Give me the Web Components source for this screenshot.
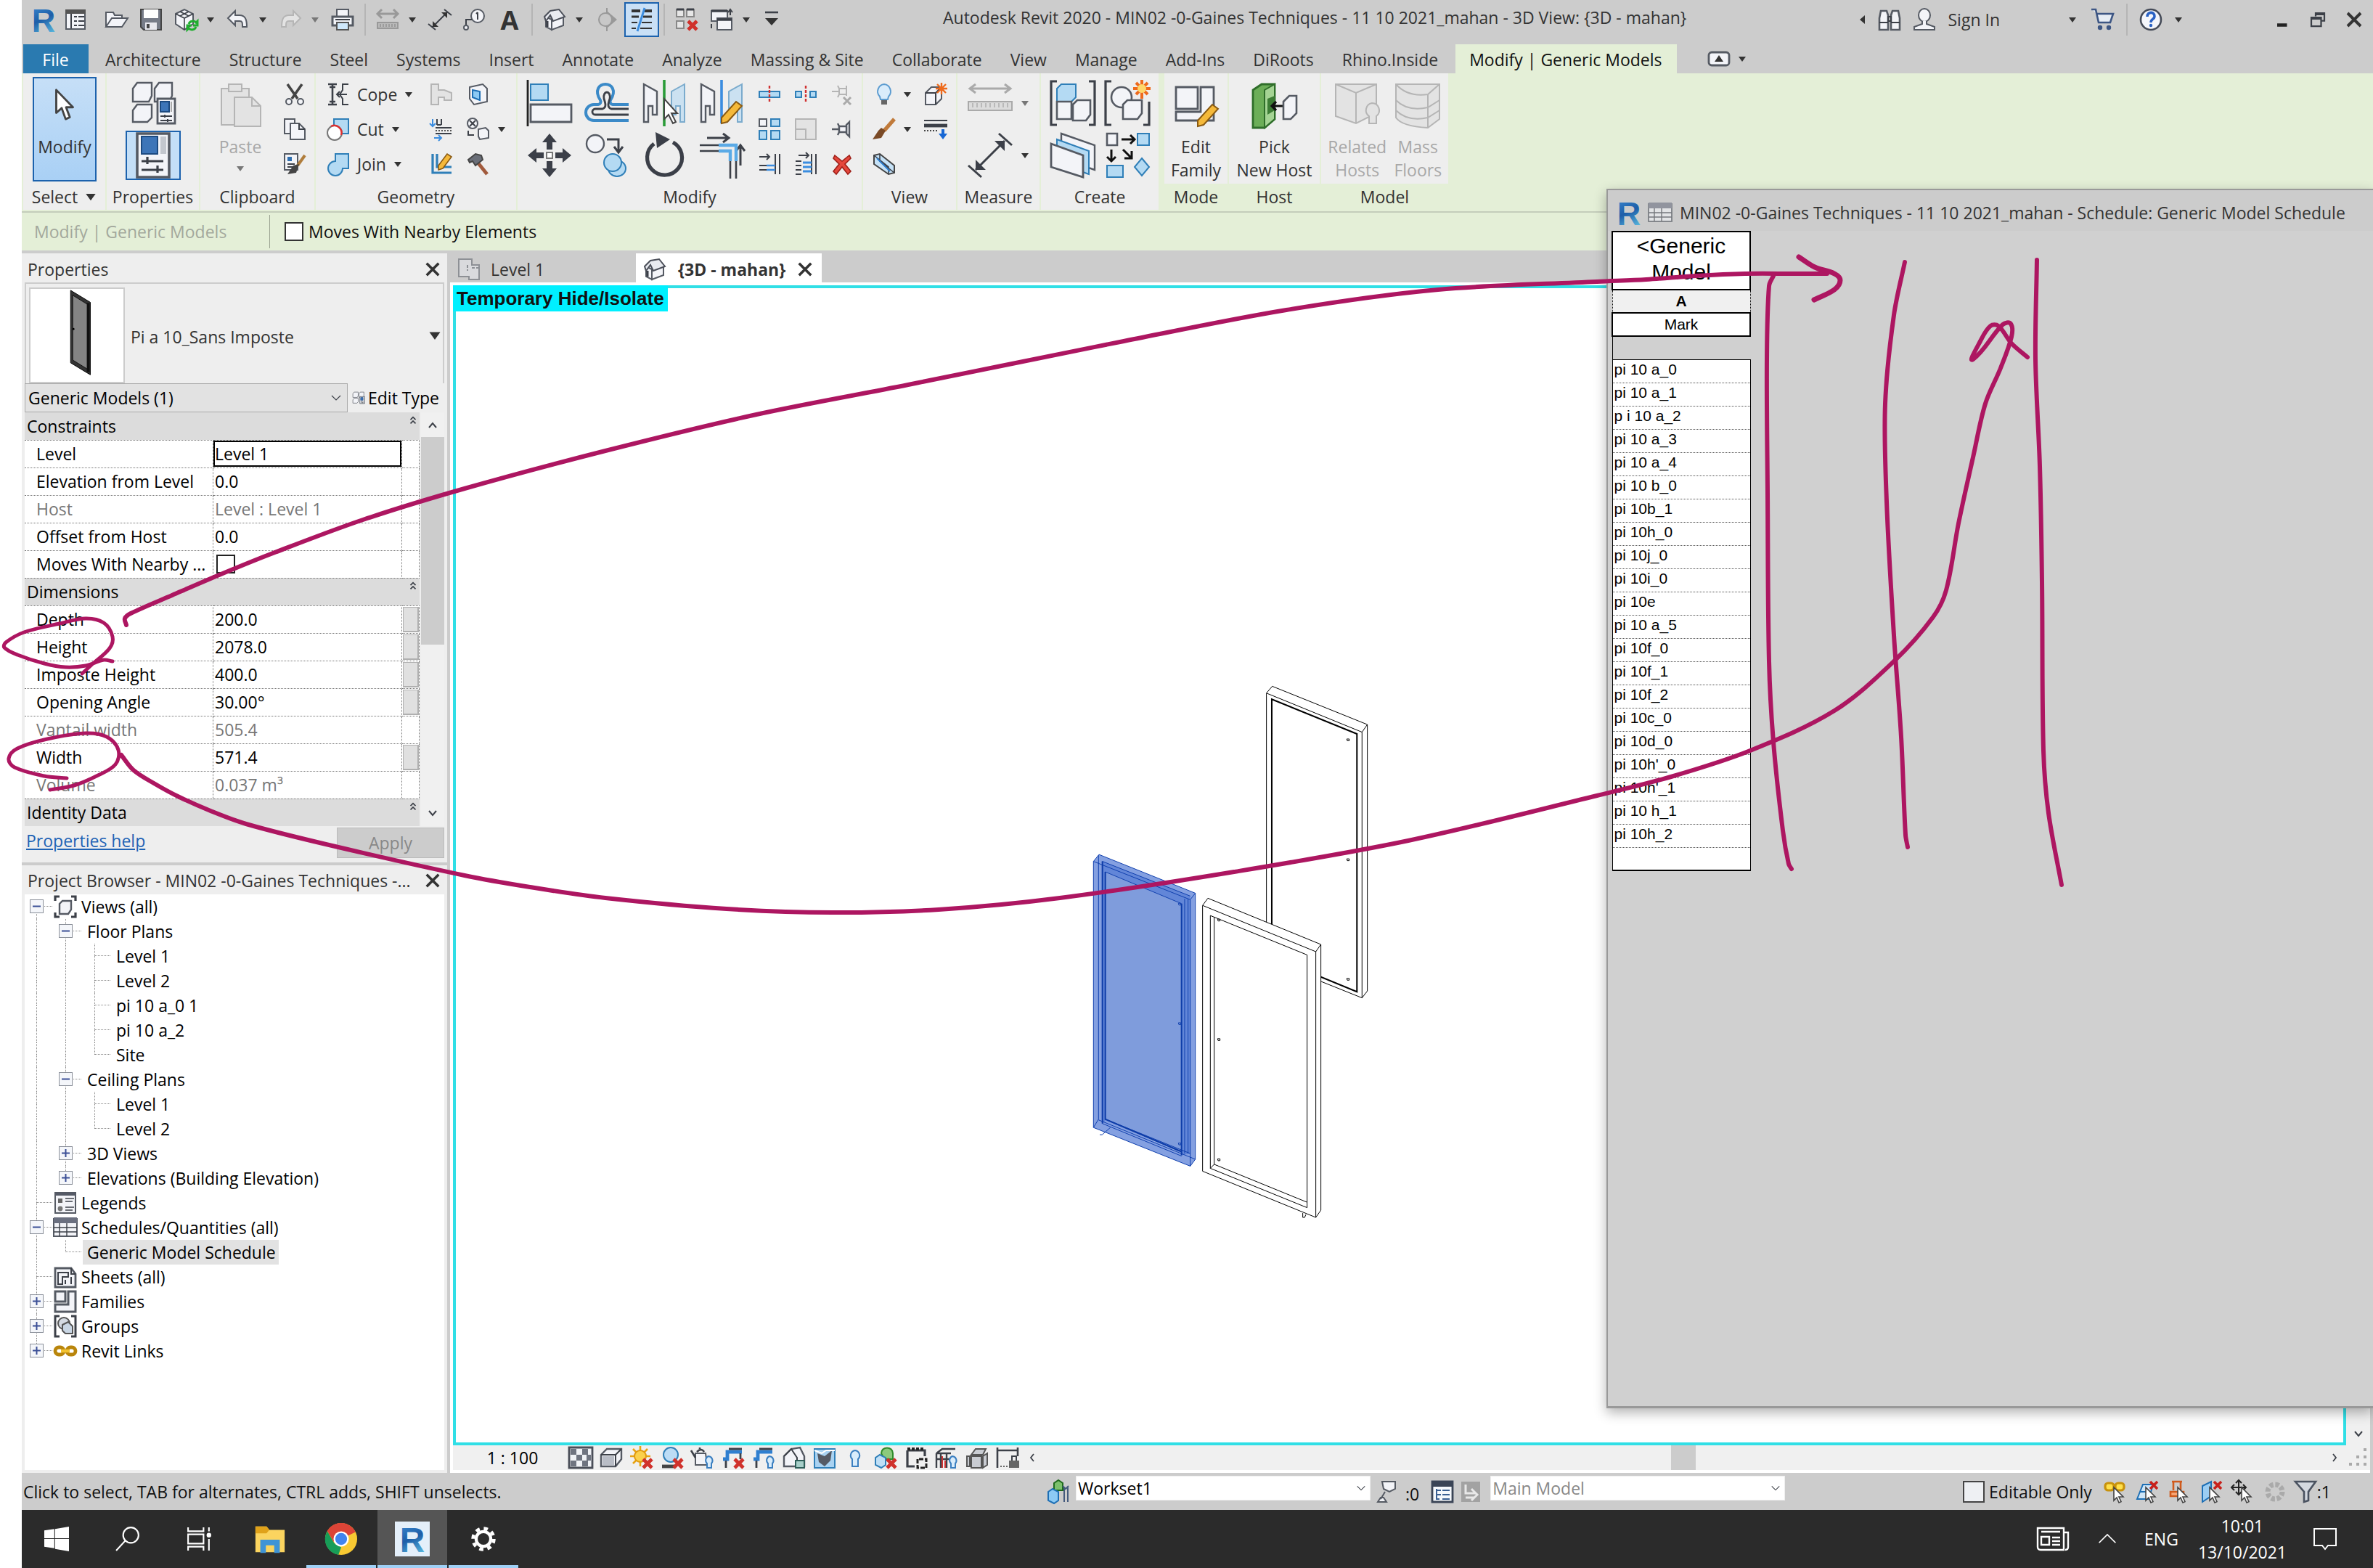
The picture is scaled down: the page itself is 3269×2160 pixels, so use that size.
<!DOCTYPE html>
<html lang="en">
<head>
<meta charset="utf-8">
<title>Autodesk Revit 2020</title>
<style>
    body{
        margin: 0;
        background: #fff;
        color: #333;
        font: 23px/32px "Open Sans", "Noto Sans", sans-serif;
    }
</style>
</head>
<body>
<revit-app></revit-app>

<script>
// ---------- icons ----------
// [viewBox size, markup]; o = grey outline, b = blue, k = dark line, g = disabled, w = white line
const CURSOR = '<path d="M7 5v9l2-2 1.500 3.500 1.500-.7-1.500-3.300h3z" fill="#fff" stroke="#444" stroke-width=".8"/>'
const REDX = '<path d="M9 9l6 6M15 9l-6 6" stroke="#d0312b" stroke-width="2.400"/>'
const BULB = '<path d="M12 7a3 3 0 0 1 2 5v3h-3v-3a3 3 0 0 1 1-5z" fill="#d9ecfb" stroke="#3b7fc0"/>'
const icons = {
    caret: [12, '<path d="M1 3h10l-5 7z" fill="#333"/>'],
    caretDim: [12, '<path d="M1 3h10l-5 7z" fill="#777"/>'],
    caretLeft: [12, '<path d="M10 0v12l-7-6z" fill="#333"/>'],
    revit: [32, '<defs><linearGradient id="r" x1="0" y1="0" x2="0.300" y2="1"><stop offset="0" stop-color="#3f8fd6"/><stop offset=".55" stop-color="#1d5ea8"/><stop offset="1" stop-color="#57b4dc"/></linearGradient></defs><text x="16" y="33" text-anchor="middle" font-family="Liberation Sans" font-weight="700" font-size="45" fill="url(#r)">R</text>'],
    close: [16, '<path d="M2 2l12 12M14 2L2 14" stroke="#333" stroke-width="2.600" fill="none"/>'],
    minimize: [16, '<path d="M4 13h9" stroke="#222" stroke-width="3"/>'],
    restore: [16, '<path d="M6 5V2h8v7h-3" class="k" stroke-width="1.500"/><path d="M2 6h9v8H2z" class="k" stroke-width="1.500"/><path d="M2 7h9M6 3h8" class="k" stroke-width="2"/>'],
    up: [16, '<path d="M3 11l5-6 5 6" class="k" stroke-width="2"/>'],
    down: [16, '<path d="M3 5l5 6 5-6" class="k" stroke-width="2"/>'],
    thinDown: [16, '<path d="M2 5l6 6 6-6" class="k" stroke-width="1.200"/>'],
    left: [16, '<path d="M10 3L6 8l4 5" class="k" stroke-width="1.800"/>'],
    right: [16, '<path d="M6 3l4 5-4 5" class="k" stroke-width="1.800"/>'],
    collapse: [16, '<path d="M4 7l4-4 4 4M4 13l4-4 4 4" class="k" stroke-width="2"/>'],
    panel: [16, '<path d="M1.500 1.500h13v13h-13z" class="o"/><path d="M1 1h14v3H1z" fill="#555"/><path d="M5 4v10M7 6h2M10 6h4M7 9h2M10 9h4M7 12h2M10 12h4" class="k"/>'],
    open: [16, '<path d="M1 13V3h5l1 2h5v3" class="o"/><path d="M1 13l4-6h11l-4 6z" class="o"/>'],
    save: [16, '<path d="M1 1h14v14H3l-2-2z" fill="#777c88" stroke="#444"/><path d="M3 1h10v6H3z" fill="#fff"/><path d="M4 10h8v5H4z" fill="#e8e8ee"/><path d="M5 11h2v3H5z" fill="#444"/>'],
    sync: [16, '<path d="M1 4l6-3 6 3v7l-6 4-6-4z" class="o"/><path d="M1 4l6 3 6-3M7 7v8M4 2.500l6 3M10 2.500l-6 3" class="k" stroke-width=".8"/><path d="M10 11a3 3 0 0 1 5-1l1-1v3h-3M15 13a3 3 0 0 1-5 1l-1 1v-3h3" fill="none" stroke="#1fae2e" stroke-width="1.500"/>'],
    undo: [16, '<path d="M1 7l5-5v3h3c4 0 5 3 5 8h-3c0-3 0-4-2-4H6v3z" class="o"/>'],
    redo: [16, '<path d="M15 7l-5-5v3H7c-4 0-5 3-5 8h3c0-3 0-4 2-4h3v3z" class="g"/>'],
    print: [16, '<path d="M4 6V1h8v5" class="o"/><path d="M1 6h14v6H1z" class="o" stroke-width="1.500"/><path d="M4 10h8v5H4z" fill="#cfe8fb" stroke="#555"/><path d="M3 8h10" class="k"/>'],
    measure: [16, '<path d="M1 4h14M4 1L1 4l3 3M12 1l3 3-3 3" stroke="#999" fill="none" stroke-width="1.500"/><path d="M1 10h14v4H1z" fill="#bbb" stroke="#999"/><path d="M3 11v2M5 11v2M7 11v2M9 11v2M11 11v2M13 11v2" stroke="#888" stroke-width=".6"/>'],
    dim: [16, '<path d="M3 13L13 3M0 11l5 4M11 1l5 4" class="k"/><path d="M3 13V9l4 4zM13 3v4L9 3z" fill="#333"/>'],
    tag: [16, '<circle cx="10" cy="5.500" r="4.500" class="o"/><path d="M10 3v5M9 4l1-1M6 8H2v4" class="k"/><circle cx="2" cy="13.500" r="1.500" class="o"/>'],
    textA: [16, '<text x="8" y="15" text-anchor="middle" font-family="Open Sans" font-weight="700" font-size="18" fill="#333">A</text>'],
    house: [16, '<path d="M2 6l4 2v7l-4-2z" class="o"/><path d="M6 8l8-2v6l-8 3z" class="o"/><path d="M1 6l4-4 6-1 4 5-8 3-2-4-3 4z" fill="#e9ebf0" stroke="#4a4e58"/><path d="M3 9v4" class="k" stroke-width="1.500"/>'],
    section: [16, '<path d="M8 0v16" stroke="#999"/><path d="M8 2l7 6-7 6z" fill="#999"/><circle cx="7" cy="8" r="4.500" fill="#c8c8c8" stroke="#999"/>'],
    thin: [16, '<path d="M1 2h6M10 2h5" stroke="#333" stroke-width="2"/><path d="M1 6h5M9 6h6" stroke="#333" stroke-width="1.500"/><path d="M1 10h4M8 10h7M1 14h3M7 14h8" stroke="#333"/><path d="M10 0L5 16" stroke="#3b8de0" stroke-width="1.500"/>'],
    closeHidden: [16, '<path d="M1 1h5v5H1zM8 1h5v5H8zM1 9h5v5H1z" fill="#e6e6e6" stroke="#888"/><path d="M1 1h5M8 1h5" class="k" stroke-width="1.500"/>' + REDX],
    switchWin: [16, '<path d="M1 2h11v7H1z" class="o"/><path d="M5 7h10v8H5z" class="o"/><path d="M1 2h11M5 8h10" class="k" stroke-width="1.800"/><path d="M14 5V1M1 14v-3M12.500 3L14 1l1.500 2" class="k"/>'],
    customize: [16, '<path d="M2 3h9" class="k" stroke-width="1.300"/><path d="M2 7h9l-4.500 5z" fill="#333"/>'],
    binoculars: [16, '<path d="M2 2h4l1 3v10H1V7zM14 2h-4L9 5v10h6V7z" class="o" stroke-width="1.300"/><path d="M1 10h6M9 10h6M7 6h2v3H7z" class="k"/>'],
    person: [16, '<ellipse cx="8" cy="5" rx="4" ry="4.500" class="o"/><path d="M6.500 9v2L1 13v2h14v-2l-5.500-2V9" class="o"/>'],
    cart: [16, '<path d="M0 1h3l2 9h8l2-6H4" fill="#e7edf5" stroke="#3d5684" stroke-width="1.300"/><circle cx="6" cy="13.500" r="1.600" fill="#3d5684"/><circle cx="12" cy="13.500" r="1.600" fill="#3d5684"/>'],
    help: [16, '<circle cx="8" cy="8" r="7" fill="#f4f6fb" stroke="#454b58" stroke-width="1.300"/><path d="M5.500 6c0-4 5.500-3.500 5 0-.3 2-2.500 1.500-2.500 4" fill="none" stroke="#2a62c4" stroke-width="1.800"/><circle cx="8" cy="12" r="1.100" fill="#2a62c4"/>'],
    ribbonToggle: [16, '<rect x="1" y="3.500" width="14" height="9" rx="2" class="o" stroke-width="1.400"/><path d="M8 5.500l3 4.500H5z" fill="#333"/>'],
    cursor: [16, '<path d="M4 1v11l2.600-2.300L8.500 15l2-.9-1.800-4.800H12z" fill="#fff" stroke="#444" stroke-linejoin="round"/>'],
    cut2: [16, '<path d="M3 1l7 10M13 1L6 11" stroke="#444" stroke-width="1.800"/><circle cx="4" cy="13" r="2" class="o"/><circle cx="12" cy="13" r="2" class="o"/>'],
    copyClip: [16, '<path d="M1 1h7v10H1z" class="o"/><path d="M5 4h6l4 4v7H5z" class="o"/><path d="M11 4v4h4" class="k"/>'],
    matchType: [16, '<path d="M1 1h9v11H1z" class="o"/><path d="M3 3h3v3H3z" fill="#2f6fb0"/><path d="M3 8h5M3 10h4" class="k"/><path d="M15 2l-5 7" stroke="#b07d3c" stroke-width="2"/><path d="M11 8l-2 6-6 1 4-6z" fill="#444"/>'],
    cope: [16, '<path d="M1 1h6M1 15h6M4 1v14M2 3h4M2 13h4" class="k" stroke-width="1.300"/><path d="M15 1h-4v4l-2 3 2 3v4h4" class="k"/><path d="M14 8H7M9 6L7 8l2 2" class="k"/>'],
    cutGeo: [16, '<path d="M5 1h10v10H5z" class="b"/><circle cx="5.500" cy="10.500" r="5" fill="#fff" stroke="#777"/><path d="M3 6a5 5 0 0 1 7 6" fill="none" stroke="#e03030" stroke-width="1.200"/>'],
    joinGeo: [16, '<path d="M6 1h9v10h-4a5 5 0 1 1-5-5z" class="b"/>'],
    joinRoof: [16, '<path d="M1 1h5v4h4l5 2v5l-5 0v-2H6v5H1z" class="g"/>'],
    splitFace: [16, '<path d="M2 3l9-2 3 3v9l-9 2-3-4z" class="o"/><path d="M4 5l5 1v6l-5-2z" fill="#8ccaf4" stroke="#1d6fb5"/>'],
    wallJoin: [16, '<path d="M2 1v5M0 4l2 2 2-2M3 14h5M6 12l2 2-2 2" stroke="#3b8de0" fill="none"/><path d="M5 1v4M8 1v4M5 5h3M4 7h11M4 11h11" class="k"/><path d="M4 9h11" stroke="#555" stroke-dasharray="1 1"/>'],
    beam: [16, '<circle cx="4" cy="4" r="3.500" class="o"/><path d="M2 2l4 4M6 2L2 6M1 9v3h4" class="k"/><path d="M8 8l5-1 2 2v5l-6 1-1-2z" class="o"/>'],
    wallEdit: [16, '<path d="M2 1v13h13M5 1v9h10" fill="none" stroke="#2f7fb8" stroke-width="1.600"/><path d="M6 9l6-8 3 2-6 8-3 1z" fill="#f5b93a" stroke="#8a5a12" stroke-width=".8"/>'],
    hammer: [16, '<path d="M6 5l8 10" stroke="#a15a3c" stroke-width="2.400"/><path d="M1 5l5-4 4 1 1 3-5 4-2-3-2 1z" fill="#6a6e78" stroke="#444"/>'],
    split: [16, '<path d="M1 6h14v4H1z" class="b"/><path d="M8 2v12" stroke="#d03030" stroke-dasharray="2 1" stroke-width="1.200"/>'],
    splitGap: [16, '<path d="M1 6h4v4H1zM11 6h4v4h-4z" class="b"/><path d="M8 2v12" stroke="#d03030" stroke-dasharray="2 1" stroke-width="1.200"/>'],
    unpin: [16, '<path d="M5 2l1 2v4l-1 2M6 4h5M6 8h5M11 2v7M1 6h5" stroke="#b5b5b5" fill="none"/><path d="M9 10l5 5M14 10l-5 5" stroke="#aaa" stroke-width="1.500"/>'],
    pin: [16, '<path d="M5 4l1 2v4l-1 2M13 3l-2 2v6l2 2z" class="o" stroke-width="1.200"/><path d="M6 6h5v4H6zM1 8h5" class="o" stroke-width="1.200"/>'],
    array: [16, '<path d="M1 1h5v5H1z" class="o"/><path d="M9 1h6v5H9zM1 9h5v6H1zM9 9h6v6H9z" class="b"/>'],
    scale: [16, '<path d="M1 1h14v14H1z" class="g"/><path d="M1 8h7v7H1z" class="g"/>'],
    trimOne: [16, '<path d="M12 1v14M15 1v14M1 3h7M6 1l2 2-2 2M1 9h5M1 12h5" class="k"/><path d="M6 9h6M6 12h6" stroke="#3b8de0" stroke-width="1.200"/>'],
    trimMany: [16, '<path d="M12 1v14M15 1v14M3 2h7M8 0l2 2-2 2M1 6h4M1 9h4M1 12h4M1 15h4" class="k"/><path d="M6 7h6M6 10h6M6 13h6" stroke="#3b8de0" stroke-width="1.600"/>'],
    del: [16, '<path d="M3 2l5 4 5-4 1 2-4 4 4 5-2 2-4-5-4 5-2-2 4-5-4-4z" fill="#e5473c" stroke="#9e1f18" stroke-width=".8"/>'],
    bulb: [16, '<path d="M8 1a5 5 0 0 1 3 8.500l-.5 2h-5l-.5-2A5 5 0 0 1 8 1z" fill="#d9ecfb" stroke="#5b9bd0"/><path d="M6 12h4v3H6z" fill="#666"/>'],
    brush: [16, '<path d="M15 1L8 9" stroke="#c07a3a" stroke-width="2.600"/><path d="M9 9l-3 5-6 1 4-6 2-2z" fill="#7a4a26"/>'],
    viewBox: [16, '<path d="M1 2l4-1 10 8v5l-4 1L1 8z" fill="#c6e2f7" stroke="#444"/><path d="M5 1v5l10 8M1 2l10 8v5" class="k" stroke-width=".8"/><path d="M3 4l9 9" stroke="#2f7fd0"/>'],
    sunBox: [16, '<path d="M1 7l4-4h7v8l-4 4H1z" class="o"/><path d="M1 7h7v8M8 7l4-4" class="k"/><path d="M12 0v8M8 4h8M9 1l6 6M15 1L9 7" stroke="#ee6a1c" stroke-width="1.200"/>'],
    thinLines: [16, '<path d="M0 2h16" class="k"/><path d="M0 5.500h16" class="k" stroke-width="2.400"/><path d="M0 9h10" stroke="#444" stroke-dasharray="1 1"/><path d="M12 8v3h-2l3 4 3-4h-2V8z" fill="#1767d4"/>'],
    // large, 32 grid
    typeProps: [32, '<path d="M2 6l3-4h10v9l-2 4H2zM17 6l3-4h9v9l-2 4H17zM2 21l3-4h10v9l-3 3H2z" class="o" stroke-width="1.200"/><path d="M19 13h12v17H19z" class="o" stroke-width="1.400"/><path d="M21 15h6v7h-6z" fill="#3d75b8" stroke="#1c4a80"/><path d="M28 15h1v7h-1z" fill="#aaa"/><path d="M21 25h8M21 28h8M24 24v2M26 27v2" class="k"/>'],
    props: [32, '<path d="M5 1h22v30H5z" class="o" stroke-width="1.800"/><path d="M8 3h11v12H8z" fill="#3d75b8" stroke="#1c4a80"/><path d="M21 3h4v12h-4z" fill="#c3c7ce"/><path d="M8 20h15M8 26h15M12 17v5M19 23v5" class="k" stroke-width="1.600"/>'],
    paste: [32, '<path d="M3 4h19v25H3z" class="g"/><path d="M8 1h9v5H8z" class="g"/><path d="M12 10h12l6 6v14H12z" class="g"/><path d="M24 10v6h6" fill="none" stroke="#b5b5b5"/>'],
    align: [32, '<path d="M1 0v32" stroke="#222" stroke-width="1.400"/><path d="M3 3h12v11H3z" class="b"/><path d="M3 17h28v12H3z" class="o" stroke-width="1.400"/>'],
    offset: [32, '<path d="M31 28H7a5.500 5.500 0 0 1 0-11h3a2 2 0 0 0 1.500-3C7 7 11 3 15 3s8 4 3.500 11a2 2 0 0 0 1.500 3h11" fill="none" stroke="#3b8ac8" stroke-width="2"/><path d="M31 24H8a2 2 0 0 1 0-4h5c3-1 2-4 1-7-1-6 5-6 4 0-1 3-2 6 1 7h12" class="k" stroke-width="1.400"/>'],
    mirrorPick: [32, '<path d="M2 3l9 5v16H8v-6H5v11H2z" class="o" stroke-width="1.200"/><path d="M30 3l-9 5v16h3v-6h3v11h3z" class="b" opacity=".6"/><path d="M16 0v32" stroke="#2a9c38" stroke-width="1.800"/><path d="M16 13v14l3-3 3 6 2-1-3-6h4z" fill="#fff" stroke="#444"/>'],
    mirrorDraw: [32, '<path d="M2 3l9 5v16H8v-6H5v11H2z" class="o" stroke-width="1.200"/><path d="M30 3l-9 5v16h3v-6h3v11h3z" class="b" opacity=".6"/><path d="M16 0v30" stroke="#3b8de0" stroke-width="1.800"/><path d="M16 26L26 15l4 3-10 11-4 1z" fill="#f5b93a" stroke="#8a5a12"/>'],
    move: [32, '<path d="M16 1l5 6h-3v5h-4V7h-3zM16 31l5-6h-3v-5h-4v5h-3zM1 16l6-5v3h5v4H7v3zM31 16l-6-5v3h-5v4h5v3z" fill="#3b3f48"/><path d="M14 14h4v4h-4z" fill="#fff" stroke="#777"/>'],
    copy: [32, '<circle cx="8" cy="8" r="6" class="o" stroke-width="1.200"/><ellipse cx="23" cy="25" rx="6" ry="5.500" class="b"/><ellipse cx="20" cy="21" rx="6" ry="6" class="b"/><path d="M16 5h8v8M21 10l3 4 3-4" class="k" stroke-width="1.500"/>'],
    rotate: [32, '<path d="M22 7a12 12 0 1 1-13 1" fill="none" stroke="#3b3f48" stroke-width="2.600"/><path d="M10 0l10 5-9 6z" fill="#3b3f48"/>'],
    trim: [32, '<path d="M6 4h14M17 1l4 3-4 3M29 23V10M26 13l3-4 3 4" class="k" stroke-width="1.500"/><path d="M1 9h13M1 13h13M22 20v12M26 20v12" class="k" stroke-width="1.300"/><path d="M14 9h12v11M14 13h8v7" fill="none" stroke="#5aaae6" stroke-width="2.200"/>'],
    ruler: [32, '<path d="M2 6h28M6 3L2 6l4 3M26 3l4 3-4 3" stroke="#aaa" fill="none" stroke-width="1.500"/><path d="M1 15h30v6H1z" fill="#dcdcdc" stroke="#aaa"/><path d="M4 16v3M7 16v3M10 16v3M13 16v3M16 16v3M19 16v3M22 16v3M25 16v3M28 16v3" stroke="#aaa" stroke-width=".7"/>'],
    bigDim: [32, '<path d="M6 26L26 6M1 23l9 8M22 1l9 8" class="k" stroke-width="1.500"/><path d="M6 26v-7l7 7zM26 6v7l-7-7z" fill="#3b3f48"/>'],
    createGroup: [32, '<path d="M5 1H1v30h4M27 1h4v30h-4" class="k" stroke-width="1.600"/><path d="M5 6l3-3h10v9l-3 3H5z" class="b"/><path d="M5 15h10v12H5zM16 17l3-3h9v10l-3 4h-9z" class="o" stroke-width="1.300"/>'],
    createSimilar: [32, '<path d="M5 1H1v30h4M27 31h4V15" class="k" stroke-width="1.600"/><circle cx="12" cy="12" r="7" class="o" stroke-width="1.300"/><path d="M13 17l3-3h10v9l-3 4H13z" class="o" stroke-width="1.300"/><path d="M26 0v13M20 6h12M22 2l8 8M30 2l-8 8" stroke="#ee6a1c" stroke-width="2"/><circle cx="26" cy="6" r="3" fill="#ffd76a"/>'],
    assembly: [32, '<path d="M8 1l23 8v17l-23-8z" class="o" stroke-width="1.200"/><path d="M5 5l22 8v16L5 21z" class="b"/><path d="M1 8l22 8v15L1 24z" class="o" stroke-width="1.400"/>'],
    parts: [32, '<path d="M2 1h7v8H2z" class="o" stroke-width="1.300"/><path d="M23 1h8v8h-8zM2 23h11v8H2zM26 18l5 6-5 6-5-6z" class="b"/><path d="M12 5h9M18 2l3 3-3 3M5 12v8M2 17l3 3 3-3M13 12l6 6M19 13v5h-5" stroke="#111" fill="none" stroke-width="1.500"/>'],
    editFamily: [32, '<path d="M2 3h15v15H2zM19 3h9v23H2v-6h17z" class="o" stroke-width="1.400"/><path d="M17 26L27 15l4 3-10 11-4 1z" fill="#f5b93a" stroke="#8a5a12"/>'],
    pickHost: [32, '<path d="M1 5l6-4h9v24l-7 6H1z" fill="#6cae58" stroke="#2f6e2a" stroke-width="1.400"/><path d="M9 5l7-4v24l-7 6z" fill="#a5d494" stroke="#2f6e2a"/><path d="M11 11l5-2v10l-5 3z" fill="#3d7d35"/><path d="M22 16h-8M17 13l-3 3 3 3" stroke="#111" fill="none" stroke-width="1.600"/><path d="M22 13l4-4h5v12l-4 4h-5z" class="o" stroke-width="1.300"/>'],
    relatedHosts: [32, '<path d="M1 1h28v20l-14 7-14-5z" class="g"/><path d="M15 7v21M1 1l14 6 14-6" fill="none" stroke="#b5b5b5"/><path d="M26 14a5 5 0 0 1 3 9v5h-5v-5a5 5 0 0 1 2-9z" class="g"/>'],
    massFloors: [32, '<path d="M1 1h30v24l-8 6Q5 30 1 24z" class="g"/><path d="M1 1q8 9 22 7l8-7M1 12q8 8 22 5l8-5M1 19q8 8 22 5l8-5M23 8v23" fill="none" stroke="#b5b5b5"/>'],
    // tree and tabs
    views: [16, '<path d="M1 4V1h3M12 1h3v3M15 12v3h-3M4 15H1v-3" class="k" stroke-width="1.600"/><path d="M4 6l2-2h6v6l-2 3H4z" class="o" stroke-width="1.200"/>'],
    legend: [16, '<path d="M1 1h14v14H1z" class="o"/><path d="M1 1h14v2H1z" fill="#555a66"/><path d="M3 5h3v3H3z" fill="#666"/><circle cx="4.500" cy="12" r="1.700" fill="#777"/><path d="M8 5h6M8 7h5M8 11h6M8 13h5" class="k" stroke-width=".8"/>'],
    schedule: [16, '<path d="M0 2h16v12H0z" class="o"/><path d="M0 1h16v4H0z" fill="#6b7080"/><path d="M0 8h16M0 11h16M4 5v9M9 5v9" class="k" stroke-width=".7"/>'],
    sheet: [16, '<path d="M1 2h11l3 4v9H1z" class="o" stroke-width="1.400"/><path d="M3 5h7v3H6v5H3zM12 2v4h3M8 10v3M12 8v5" class="k"/>'],
    family: [16, '<path d="M1 1h7v7H1zM10 1h5v14H1v-5h9z" class="o" stroke-width="1.500"/>'],
    group: [16, '<path d="M4 1H1v14h3M12 1h3v14h-3" class="k" stroke-width="1.500"/><circle cx="7" cy="6" r="4" fill="#d4dae2" stroke="#555"/><path d="M6 7l4-2 3 3v5H8l-2-2z" fill="#c9d6e4" stroke="#555"/>'],
    link: [16, '<rect x="1" y="5.500" width="6" height="5" rx="2.500" fill="none" stroke="#b9850b" stroke-width="2.400"/><rect x="9" y="5.500" width="6" height="5" rx="2.500" fill="none" stroke="#b9850b" stroke-width="2.400"/><path d="M5 8h6" stroke="#f2c230" stroke-width="2.200"/>'],
    plan: [16, '<path d="M1 1h9v4h5v10H8v-2H1z" fill="#d9dadd" stroke="#8d9095"/><path d="M7 5v4M10 7h5" stroke="#8d9095" stroke-dasharray="2 1"/>'],
    // view control bar
    detail: [16, '<path d="M0 1h16v14H0z" fill="#f0f2f6" stroke="#4a4e58" stroke-width="1.400"/><path d="M1 2h4v4H1zM9 2h4v4H9zM5 6h4v4H5zM12 6h3v4h-3zM1 10h4v4H1zM9 10h4v4H9z" fill="#6f7480"/>'],
    style: [16, '<path d="M1 6l4-4h10v7l-4 5H1z" class="o" stroke-width="1.200"/><path d="M1 6h10v8M11 6l4-4" class="k"/><path d="M2 7h8v6H2z" fill="#b9bdc6"/>'],
    sunOff: [16, '<path d="M7 0v14M0 7h14M2 2l10 10M12 2L2 12" stroke="#e8a312" stroke-width="1.300"/><circle cx="7" cy="7" r="4" fill="#fbd14b" stroke="#e09a10"/>' + REDX],
    shadowOff: [16, '<circle cx="7" cy="6" r="5" fill="#bcdcf5" stroke="#2f7fb8"/><path d="M1 14h9" stroke="#444" stroke-width="2.400"/>' + REDX],
    teapot: [16, '<path d="M3 5h7l1 8H3z" class="o"/><path d="M0 3l3 5M4 4q3-3 5 0M6 1v1" class="k" stroke-width="1.300"/>' + BULB],
    cropOff: [16, '<path d="M1 9h3V4h10" fill="none" stroke="#2f7fd0" stroke-width="2.400"/><path d="M3 15v-5M5 2h9M13 5v4" class="k" stroke-width="1.400"/>' + REDX],
    cropShow: [16, '<path d="M1 9h3V4h10" fill="none" stroke="#2f7fd0" stroke-width="2.400"/><path d="M3 15v-5M5 2h9" class="k" stroke-width="1.400"/>' + BULB],
    lockView: [16, '<path d="M1 7l5-5 6-1 3 6v7H1z" class="o" stroke-width="1.200"/><path d="M1 7l5-5 4 6v6" class="k"/><path d="M9 10h6v5H9z" fill="#a6cfc9" stroke="#2c5e58"/>'],
    hideIsolate: [16, '<path d="M1 2h14v13H1z" fill="#a9d2f1" stroke="#2f7fb8"/><path d="M3 5l5 2 5-4-1 7-4 4-4-3z" fill="#555a64"/><path d="M1 3l5 2 3-2h6" fill="none" stroke="#fff"/>'],
    reveal: [16, '<path d="M8 3a3.500 3.500 0 0 1 2 6v5H6V9a3.500 3.500 0 0 1 2-6z" fill="#d9ecfb" stroke="#3b7fc0"/>'],
    worksharing: [16, '<path d="M5 5c0-5 8-5 8 0v4H7z" fill="#8cc97c" stroke="#2f8a2a"/><path d="M1 8l3-2 4 2v5l-3 2-4-2z" fill="#bfdff6" stroke="#2f7fb8"/>' + REDX],
    constraints: [16, '<path d="M2 3h12v4M2 3v11h5" class="k" stroke-width="1.600"/><path d="M2 2h12" stroke="#222" stroke-dasharray="2 1" stroke-width="2"/><path d="M9 9v6h6V9z" stroke="#222" fill="none" stroke-dasharray="3 1" stroke-width="1.500"/>'],
    analytic: [16, '<path d="M1 5l4-3h9M1 5v10M4 5v10M8 5v10M1 5h10M1 9h10" class="k" stroke-width="1.200"/><path d="M5 7v8M7 10v5" stroke="#c33"/>' + BULB],
    displace: [16, '<path d="M4 6l3-4h7l-2 4zM1 7h2v7H1zM4 7h7v8H4zM12 7l3-2v8l-3 2z" fill="#c9ccd2" stroke="#555"/>'],
    dimLock: [16, '<path d="M1 1v14M15 1v6M1 3h14" class="k" stroke-width="1.300"/><path d="M3 14h6" stroke="#666" stroke-dasharray="1 1"/><path d="M9 10h7v5H9z" fill="#666"/><path d="M11 10V7h3v3" class="k"/>'],
    // status bar
    worksets: [16, '<path d="M5 2l3-2 3 2v5H5z" fill="#7cc06c" stroke="#1f6a1c"/><path d="M1 8l3-2 4 2v6l-3 2-4-2z" fill="#8ccaf4" stroke="#1d6fb5"/><path d="M12 5v10M14.500 5v10M11 4l2 2 2-2" stroke="#445a7d" fill="none"/>'],
    request: [16, '<path d="M4 1h9v5l-4 2-4-2zM6 8l-3 5M1 15h6l-2-3H3z" class="o"/>'],
    design: [16, '<path d="M1 1h14v14H1z" fill="#f5f8fc" stroke="#3a4456" stroke-width="1.400"/><path d="M1 3h14" stroke="#3a4456" stroke-width="3"/><path d="M4 6v7h2M4 7h3M8 7h5M4 10h3M8 10h5M8 13h5" stroke="#3a5f92" fill="none"/>'],
    designOff: [16, '<path d="M0 1h13v14H0z" fill="#a2a2a2"/><path d="M3 3v6h7M7 6l4 4-4 4M3 12h6" stroke="#e8e8e8" fill="none" stroke-width="1.500"/>'],
    selLinks: [16, '<rect x="1" y="2" width="6" height="5" rx="2" fill="#ffe04a" stroke="#c8920d" stroke-width="1.600"/><rect x="8" y="2" width="6" height="5" rx="2" fill="#ffe04a" stroke="#c8920d" stroke-width="1.600"/>' + CURSOR],
    selUnder: [16, '<path d="M1 13l4-10h7l-3 10zM3 8h7" fill="#cfe6f8" stroke="#1d6fb5"/><path d="M10 1l5 5M15 1l-5 5" stroke="#c8201a" stroke-width="1.800"/>' + CURSOR],
    selPinned: [16, '<path d="M3 1h7M4 1v6M9 1v6M2 8h9v3H2z" fill="#f9a878" stroke="#d05a1c" stroke-width="1.300"/>' + CURSOR],
    selFace: [16, '<path d="M2 4l6-3v10l-6 4z" fill="#9bcdf2" stroke="#1d6fb5"/><path d="M10 1l5 5M15 1l-5 5" stroke="#c8201a" stroke-width="1.800"/>' + CURSOR],
    drag: [16, '<path d="M5 0v10M0 5h10M3 2l2-2 2 2M3 8l2 2 2-2M2 3L0 5l2 2M8 3l2 2-2 2" stroke="#222" fill="none"/>' + CURSOR],
    progress: [16, '<circle cx="8" cy="8" r="5" fill="none" stroke="#aaa" stroke-width="3.500" stroke-dasharray="2.600 1.330"/>'],
    filter: [16, '<path d="M1 1h14l-5 7v6l-3 1V8z" fill="#d3d8e0" stroke="#4a5260" stroke-width="1.300"/>'],
    grip: [16, '<path d="M12 2h2v2h-2zM12 7h2v2h-2zM12 12h2v2h-2zM7 7h2v2H7zM7 12h2v2H7zM2 12h2v2H2z" fill="#aaa"/>'],
    // task bar
    windows: [32, '<path d="M0 5l13-2v12H0zM14 3l18-3v15H14zM0 16h13v12L0 26zM14 16h18v16l-18-3z" fill="#fff"/>'],
    search: [32, '<circle cx="20" cy="11" r="10" class="w"/><path d="M13 18L1 31" class="w"/>'],
    taskView: [32, '<path d="M2 1v5h20V1M2 31v-5h20v5M2 10h20v12H2zM29 1v5M29 16v15" class="w"/><circle cx="29" cy="11" r="3" fill="#fff"/>'],
    explorer: [48, '<path d="M3 6h16l4 5h22v32H3z" fill="#fbd45f"/><path d="M3 6h16l4 5-4 5H3z" fill="#e0a21a"/><path d="M10 44V25h28v19h-8V33H18v11z" fill="#3f94d6"/>'],
    chrome: [48, '<circle cx="24" cy="24" r="23" fill="#f8c932"/><path d="M24 24L4 12.500A23 23 0 0 1 44.500 14z" fill="#dc4437"/><path d="M4 12.500L14 30l10 6-4 11A23 23 0 0 1 4 12.500z" fill="#179d58"/><path d="M4 12.500A23 23 0 0 1 44.500 14H24L13 28z" fill="#dc4437"/><circle cx="24" cy="24" r="11" fill="#fff"/><circle cx="24" cy="24" r="8.500" fill="#4184ee"/>'],
    gear: [32, '<circle cx="16" cy="16" r="9.500" fill="none" stroke="#fff" stroke-width="4"/><circle cx="16" cy="16" r="13.500" fill="none" stroke="#fff" stroke-width="4.500" stroke-dasharray="5.300 5.300"/>'],
    news: [48, '<path d="M3 9h36v30H7q-4 0-4-4zM39 15h6v20q0 4-4 4M8 14h26M8 21h11v11H8zM23 22h11M23 27h11M23 32h11" fill="none" stroke="#fff" stroke-width="2.400"/>'],
    trayUp: [32, '<path d="M3 22l13-13 13 13" class="w"/>'],
    notify: [32, '<path d="M1 2h30v23H20l-4 5-4-5H1z" class="w"/>'],
    door: [132, '<path d="M57 2l28 17v103l-28-17z" fill="#333" stroke="#000"/><path d="M60 9l21 13v92l-21-13z" fill="#848484" stroke="#111"/><path d="M82 20v98" stroke="#111" stroke-width="4"/><circle cx="61" cy="57" r="1.500"/>']
}

class RvIcon extends HTMLElement {
    constructor() {
        super()
        this.attachShadow({ mode: 'open' })
    }

    connectedCallback() {
        const [size, markup] = icons[this.getAttribute('name')]
        this.shadowRoot.innerHTML = `
            <style>
                :host{ display: inline-block; flex: none; width: 32px; height: 32px; }
                svg{ display: block; width: 100%; height: 100%; overflow: visible; }
                .o{ fill: #f3f4f8; stroke: #555a63; }
                .b{ fill: #b4daf3; stroke: #2f7fb8; }
                .k{ fill: none; stroke: #3c4048; }
                .g{ fill: #e3e3e3; stroke: #b5b5b5; }
                .w{ fill: none; stroke: #fff; stroke-width: 2; }
            </style>
            <svg viewBox="0 0 ${size} ${size}" aria-hidden="true">${markup}</svg>`
    }
}
customElements.define('rv-icon', RvIcon)

const icon = (name, cls = '') => `<rv-icon name="${name}" class="${cls}"></rv-icon>`
const iconBtn = (name, cls = '') => `<button class="${cls}" aria-label="${name}">${icon(name, cls)}</button>`

// reset shared by every shadow root
const base = `
    :host, *{ box-sizing: border-box; }
    button{ padding: 0; border: 0; background: none; font: inherit; color: inherit; display: flex; align-items: center; }
    .caret{ width: 12px; height: 12px; }
    .big{ width: 64px; height: 64px; }
    .x{ width: 22px; height: 22px; }
`

function component(name, html) {
    const template = document.createElement('template')
    template.innerHTML = html
    customElements.define(name, class extends HTMLElement {
        constructor() {
            super()
            this.attachShadow({ mode: 'open' }).append(template.content.cloneNode(true))
        }
    })
}

// ---------- title bar ----------
component('title-bar', `
    <style>
        ${base}
        :host{ display: flex; align-items: center; height: 61px; padding: 0 14px 8px; background: #ccc; }
        .quick{ display: flex; align-items: center; gap: 16px; flex: none; width: 1255px; }
        .quick .caret{ margin-left: -4px; }
        .logo{ margin-right: -4px; }
        .sep{ width: 2px; height: 44px; background: #b5b5b5; }
        .quick .sep{ margin: 0 -2px; }
        .panel{ margin-right: 8px; }
        .panel .panel{ margin: 0; }
        .on{ padding: 6px; border: 2px solid #1c62ad; background: #c9e0f6; margin: 0 -8px; }
        .on .on{ padding: 0; border: 0; margin: 0; }
        .title{ flex: 1; padding-bottom: 6px; white-space: nowrap; }
        .right{ display: flex; align-items: center; gap: 16px; }
        .sign{ margin-right: 78px; }
        .cart{ margin-left: 4px; }
        .cart .cart{ margin: 0; }
        .win{ display: flex; gap: 26px; margin-left: 108px; }
        .win rv-icon{ width: 24px; height: 24px; }
    </style>
    <div class="quick">
        ${icon('revit', 'logo')}${iconBtn('panel', 'panel')}${iconBtn('open')}${iconBtn('save')}${iconBtn('sync')}${icon('caret', 'caret')}
        ${iconBtn('undo')}${icon('caret', 'caret')}${iconBtn('redo')}${icon('caretDim', 'caret')}${iconBtn('print')}
        <span class="sep"></span>${iconBtn('measure')}${icon('caret', 'caret')}${iconBtn('dim')}${iconBtn('tag')}${iconBtn('textA')}
        <span class="sep"></span>${iconBtn('house')}${icon('caret', 'caret')}${iconBtn('section')}${iconBtn('thin', 'on')}
        <span class="sep"></span>${iconBtn('closeHidden')}${iconBtn('switchWin')}${icon('caret', 'caret')}${iconBtn('customize')}
    </div>
    <div class="title">Autodesk Revit 2020 - MIN02 -0-Gaines Techniques - 11 10 2021_mahan - 3D View: {3D - mahan}</div>
    <div class="right">
        ${icon('caretLeft', 'caret')}${iconBtn('binoculars')}${icon('person')}<button class="sign">Sign In</button>
        ${icon('caret', 'caret')}${iconBtn('cart', 'cart')}<span class="sep"></span>${iconBtn('help')}${icon('caret', 'caret')}
        <div class="win">${iconBtn('minimize')}${iconBtn('restore')}${iconBtn('close')}</div>
    </div>
`)

// ---------- ribbon ----------
component('ribbon-tabs', `
    <style>
        ${base}
        :host{ display: flex; align-items: stretch; height: 40px; padding-left: 2px; background: #ccc; }
        button{ padding: 2px 20px 0 19px; white-space: nowrap; }
        .file{ width: 90px; margin-right: 4px; justify-content: center; background: #2a7ab0; color: #fff; }
        .active{ margin-left: 4px; background: #e4efd7; color: #111; }
        .toggle{ display: flex; align-items: center; gap: 10px; margin-left: 42px; }
    </style>
    <button class="file">File</button>
    ${['Architecture', 'Structure', 'Steel', 'Systems', 'Insert', 'Annotate', 'Analyze', 'Massing &amp; Site', 'Collaborate',
       'View', 'Manage', 'Add-Ins', 'DiRoots', 'Rhino.Inside'].map(t => `<button>${t}</button>`).join('')}
    <button class="active">Modify | Generic Models</button>
    <span class="toggle">${icon('ribbonToggle')}${icon('caret', 'caret')}</span>
`)

component('ribbon-panel', `
    <style>
        :host{ display: flex; flex-direction: column; flex: none; height: 188px; background: #eee; border-right: 2px solid #e4efd7; box-sizing: border-box; }
        .body{ display: flex; height: 152px; padding-top: 5px; box-sizing: border-box; }
        .label{ flex: 1; text-align: center; line-height: 36px; }
        :host([context]) .label{ background: #e4efd7; }
    </style>
    <div class="body"><slot></slot></div>
    <div class="label"><slot name="label"></slot></div>
`)

component('revit-ribbon', `
    <style>
        ${base}
        :host{ display: flex; height: 192px; padding-left: 2px; background: #e4efd7; border-bottom: 2px solid #c4cdbb; }
        .col, .cols{ display: grid; grid-template-rows: repeat(3, 48px); grid-auto-flow: column; align-items: center; flex: none; }
        .two{ display: grid; grid-template-rows: repeat(2, 72px); grid-auto-flow: column; align-items: center; flex: none; }
        .tool{ flex-direction: column; justify-content: flex-start; height: 144px; line-height: 32px; text-align: center; }
        .tool rv-icon{ margin: 8px 0; }
        .row{ gap: 10px; }
        .modify{ width: 88px; margin-left: 13px; background: linear-gradient(#c6dff7, #a9d0f5); border: 2px solid #1c62ad; }
        .modify rv-icon{ width: 46px; height: 46px; margin: 13px 0 19px; }
        .props{ padding: 0 4px; border: 2px solid #1c62ad; background: #c4dff7; }
        .dim{ color: #a8a8a8; }
        .context{ margin-left: 6px; }
        .select{ display: inline-flex; align-items: center; gap: 10px; }
        .select rv-icon{ width: 16px; height: 16px; }
    </style>
    <ribbon-panel style="width: 115px">
        <button class="tool modify">${icon('cursor')}Modify</button>
        <span slot="label" class="select">Select ${icon('caret')}</span>
    </ribbon-panel>
    <ribbon-panel style="width: 129px">
        <div class="two" style="margin: 0 auto; justify-items: center">${iconBtn('typeProps', 'big')}<button class="props" aria-label="Properties">${icon('props', 'big')}</button></div>
        <span slot="label">Properties</span>
    </ribbon-panel>
    <ribbon-panel style="width: 159px">
        <button class="tool dim" style="width: 80px; margin: 0 19px 0 15px">${icon('paste', 'big')}Paste${icon('caretDim', 'caret')}</button>
        <div class="col">${iconBtn('cut2')}${iconBtn('copyClip')}${iconBtn('matchType')}</div>
        <span slot="label">Clipboard</span>
    </ribbon-panel>
    <ribbon-panel style="width: 278px">
        <div class="col" style="width: 142px; margin-left: 15px">
            <button class="row">${icon('cope')}Cope ${icon('caret', 'caret')}</button>
            <button class="row">${icon('cutGeo')}Cut ${icon('caret', 'caret')}</button>
            <button class="row">${icon('joinGeo')}Join ${icon('caret', 'caret')}</button>
        </div>
        <div class="cols" style="column-gap: 19px">${iconBtn('joinRoof')}${iconBtn('wallJoin')}${iconBtn('wallEdit')}${iconBtn('splitFace')}<button class="row" aria-label="Beam joins">${icon('beam')}${icon('caret', 'caret')}</button>${iconBtn('hammer')}</div>
        <span slot="label">Geometry</span>
    </ribbon-panel>
    <ribbon-panel style="width: 476px">
        <div class="two" style="column-gap: 15px; margin: 0 18px 0 12px">
            ${['align', 'move', 'offset', 'copy', 'mirrorPick', 'rotate', 'mirrorDraw', 'trim'].map(n => iconBtn(n, 'big')).join('')}
        </div>
        <div class="cols" style="column-gap: 18px">
            ${['split', 'array', 'trimOne', 'splitGap', 'scale', 'trimMany', 'unpin', 'pin', 'del'].map(n => iconBtn(n)).join('')}
        </div>
        <span slot="label">Modify</span>
    </ribbon-panel>
    <ribbon-panel style="width: 130px">
        <div class="cols" style="column-gap: 17px; margin-left: 13px">
            <button class="row" aria-label="Hide">${icon('bulb')}${icon('caret', 'caret')}</button>
            <button class="row" aria-label="Override">${icon('brush')}${icon('caret', 'caret')}</button>
            ${iconBtn('viewBox')}${iconBtn('sunBox')}${iconBtn('thinLines')}
        </div>
        <span slot="label">View</span>
    </ribbon-panel>
    <ribbon-panel style="width: 115px">
        <div class="two" style="margin-left: 13px">
            <button class="row" aria-label="Measure">${icon('ruler', 'big')}${icon('caretDim', 'caret')}</button>
            <button class="row" aria-label="Dimension">${icon('bigDim', 'big')}${icon('caret', 'caret')}</button>
        </div>
        <span slot="label">Measure</span>
    </ribbon-panel>
    <ribbon-panel style="width: 164px">
        <div class="two" style="column-gap: 11px; margin-left: 12px">
            ${['createGroup', 'assembly', 'createSimilar', 'parts'].map(n => iconBtn(n, 'big')).join('')}
        </div>
        <span slot="label">Create</span>
    </ribbon-panel>
    <ribbon-panel context class="context" style="width: 89px">
        <button class="tool" style="width: 89px">${icon('editFamily', 'big')}Edit<br>Family</button>
        <span slot="label">Mode</span>
    </ribbon-panel>
    <ribbon-panel context style="width: 127px">
        <button class="tool" style="width: 127px">${icon('pickHost', 'big')}Pick<br>New Host</button>
        <span slot="label">Host</span>
    </ribbon-panel>
    <ribbon-panel context style="width: 177px">
        <button class="tool dim" style="width: 84px; margin-left: 8px">${icon('relatedHosts', 'big')}Related<br>Hosts</button>
        <button class="tool dim" style="width: 84px">${icon('massFloors', 'big')}Mass<br>Floors</button>
        <span slot="label">Model</span>
    </ribbon-panel>
`)

component('options-bar', `
    <style>
        ${base}
        :host{ display: flex; align-items: center; height: 52px; padding-left: 17px; background: #e4efd7; }
        .context{ width: 324px; color: #a3a89c; }
        label{ display: flex; align-items: center; gap: 7px; height: 46px; padding-left: 20px; border-left: 1px solid #9aa391; color: #111; }
        input{ appearance: none; width: 26px; height: 26px; margin: 0; border: 2px solid #333; background: #fff; }
    </style>
    <span class="context">Modify | Generic Models</span>
    <label><input type="checkbox">Moves With Nearby Elements</label>
`)

// ---------- properties palette ----------
const propertyGroups = [
    ['Constraints', [
        ['Level', 'Level 1', 'edit'],
        ['Elevation from Level', '0.0'],
        ['Host', 'Level : Level 1', 'dim'],
        ['Offset from Host', '0.0'],
        ['Moves With Nearby ...', null]
    ]],
    ['Dimensions', [
        ['Depth', '200.0', 'btn'],
        ['Height', '2078.0', 'btn'],
        ['Imposte Height', '400.0', 'btn'],
        ['Opening Angle', '30.00°', 'btn'],
        ['Vantail width', '505.4', 'dim'],
        ['Width', '571.4', 'btn'],
        ['Volume', '0.037 m³', 'dim']
    ]],
    ['Identity Data', []]
]

const propertyRow = ([name, value, kind = ''], id) => `
    <tr class="${kind}">
        <td><label for="${id}">${name}</label></td>
        <td>${value === null ? `<input type="checkbox" id="${id}">` : `<input id="${id}" value="${value}" ${kind === 'dim' ? 'readonly' : ''}>`}</td>
        <td>${kind === 'btn' ? `<button aria-label="Associate ${name}"></button>` : ''}</td>
    </tr>`

component('properties-palette', `
    <style>
        ${base}
        :host{ display: block; padding: 0 4px; background: #eee; border-bottom: 4px solid #ccc; }
        header{ display: flex; align-items: center; justify-content: space-between; height: 40px; padding: 4px 5px 0 4px; }
        .type{ display: flex; align-items: center; height: 139px; padding: 4px 2px 0 4px; border: 2px solid #ccc; border-bottom: 0; }
        .type .door{ width: 132px; height: 132px; background: #fff; border: 2px solid #ccc; }
        .type .more{ width: 18px; height: 18px; }
        .type span{ flex: 1; padding: 4px 0 0 8px; }
        .filter{ display: grid; grid-template-columns: 445px 1fr; height: 40px; }
        select{ grid-area: 1 / 1; appearance: none; font: inherit; color: #000; padding: 0 4px; background: #e2e2e2; border: 1px solid #aaa; border-radius: 0; }
        .filter .arrow{ grid-area: 1 / 1; justify-self: end; align-self: center; width: 16px; height: 16px; margin-right: 8px; pointer-events: none; }
        .filter button{ gap: 4px; padding-left: 6px; color: #000; white-space: nowrap; }
        .filter button rv-icon{ width: 18px; height: 18px; }
        .list{ display: grid; grid-template-columns: 1fr 34px; }
        table{ border-collapse: collapse; table-layout: fixed; width: 100%; background: #fff; color: #000; }
        td, th{ height: 38px; padding: 0; border: 1px dotted #777; white-space: nowrap; line-height: 30px; }
        td:first-child{ border-left: 0; padding-left: 16px; }
        th{ background: #dcdcdc; font-weight: normal; text-align: left; padding-left: 3px; border: 0; }
        th div{ display: flex; justify-content: space-between; }
        th rv-icon{ width: 14px; height: 14px; margin-right: 2px; }
        td input{ display: block; width: 100%; height: 36px; padding: 0 2px; border: 0; background: none; font: inherit; color: inherit; }
        td input[type=checkbox]{ appearance: none; width: 26px; height: 26px; margin: 0 0 0 4px; border: 2px solid #222; background: #fff; }
        .edit input{ border: 2px solid #000; padding: 0; }
        .dim{ color: #777; }
        td button{ width: 22px; height: 35px; margin: 0 auto; background: #e0e0e0; border: 2px solid #b0b0b0; border-top-width: 1px; border-left-width: 1px; }
        .scroll{ display: flex; flex-direction: column; align-items: center; justify-content: space-between; padding: 10px 0; margin-left: 2px; background: linear-gradient(#ccc, #ccc) 0 34px / 100% 286px no-repeat #f0f0f0; }
        .scroll rv-icon{ width: 16px; height: 16px; }
        footer{ display: flex; justify-content: space-between; height: 50px; padding: 2px 0 6px 2px; }
        a{ color: #1f63b5; line-height: 36px; }
        footer button{ width: 148px; justify-content: center; background: #ccc; border: 1px solid #bbb; color: #888; }
    </style>
    <header>Properties${iconBtn('close', 'x')}</header>
    <div class="type">${icon('door', 'door')}<span>Pi a 10_Sans Imposte</span>${icon('caret', 'more')}</div>
    <div class="filter">
        <select aria-label="Category"><option>Generic Models (1)</option></select>${icon('thinDown', 'arrow')}
        <button>${icon('typeProps')}Edit Type</button>
    </div>
    <div class="list">
        <table>
            <colgroup><col><col style="width: 260px"><col style="width: 24px"></colgroup>
            ${propertyGroups.map(([group, rows], g) => `
                <tr><th colspan="3"><div>${group}${icon('collapse')}</div></th></tr>
                ${rows.map((row, i) => propertyRow(row, `p${g}-${i}`)).join('')}`).join('')}
        </table>
        <div class="scroll">${icon('up')}${icon('down')}</div>
    </div>
    <footer><a href="#help">Properties help</a><button disabled>Apply</button></footer>
`)

// ---------- project browser ----------
// guides per row: | line, t tee, l elbow, m/p expander, M first expander, P last expander
const tree = [
    ['M', 'Views (all)', 'views'],
    ['|m', 'Floor Plans'],
    ['||t', 'Level 1'],
    ['||t', 'Level 2'],
    ['||t', 'pi 10 a_0 1'],
    ['||t', 'pi 10 a_2'],
    ['||l', 'Site'],
    ['|m', 'Ceiling Plans'],
    ['||t', 'Level 1'],
    ['||l', 'Level 2'],
    ['|p', '3D Views'],
    ['|P', 'Elevations (Building Elevation)'],
    ['t', 'Legends', 'legend'],
    ['m', 'Schedules/Quantities (all)', 'schedule'],
    ['|l', 'Generic Model Schedule', 'selected'],
    ['t', 'Sheets (all)', 'sheet'],
    ['p', 'Families', 'family'],
    ['p', 'Groups', 'group'],
    ['P', 'Revit Links', 'link']
]

function guide(code) {
    const line = d => `<path d="${d}" stroke="#888" stroke-dasharray="1 1"/>`
    let out = ''
    if ('|tmpPl'.includes(code)) out += line('M16.500 0V17')
    if ('|tmpM'.includes(code)) out += line('M16.500 17V34')
    if (code !== '|') out += line('M17 16.500H39')
    if ('mMpP'.includes(code)) {
        out += '<rect x="7.500" y="7.500" width="18" height="18" fill="#f4f6fa" stroke="#8a8f99"/><path d="M11 16.500h11" stroke="#3a4f96" stroke-width="2"/>'
        if ('pP'.includes(code)) out += '<path d="M16.500 11v11" stroke="#3a4f96" stroke-width="2"/>'
    }
    const svg = `<svg width="40" height="34">${out}</svg>`
    return 'mMpP'.includes(code) ? `<button aria-label="Expand">${svg}</button>` : svg
}

component('project-browser', `
    <style>
        ${base}
        :host{ display: flex; flex-direction: column; flex: 1; padding: 0 4px 4px; background: #eee; }
        header{ display: flex; align-items: center; justify-content: space-between; height: 40px; padding: 2px 5px 0 4px; white-space: nowrap; }
        ul{ flex: 1; margin: 0; padding: 0; list-style: none; background: #fff; color: #000; }
        li{ display: flex; align-items: center; height: 34px; }
        svg{ display: block; }
        li span{ padding: 0 4px 0 6px; line-height: 34px; }
        .selected{ background: #e2e2e2; }
    </style>
    <header>Project Browser - MIN02 -0-Gaines Techniques -...${iconBtn('close', 'x')}</header>
    <ul>
        ${tree.map(([guides, text, kind]) => `
            <li>${[...guides].map(guide).join('')}${kind && kind !== 'selected' ? icon(kind) : ''}<span class="${kind === 'selected' ? kind : ''}">${text}</span></li>`).join('')}
    </ul>
`)

// ---------- drawing area ----------
component('door-model', `
    <style>
        :host{ display: block; min-height: 0; }
        svg{ display: block; width: 100%; height: 100%; }
        path{ vector-effect: non-scaling-stroke; }
        .ln{ fill: #fff; stroke: #000; stroke-width: 1; }
        .th{ stroke-width: 2; }
        .sel{ fill: #3c69cf; fill-opacity: .63; stroke: #0f3fae; stroke-width: 1; }
        .in{ fill: none; }
        .bd{ stroke: #0d3ca8; stroke-width: 2; fill: none; }
    </style>
    <svg viewBox="628 397 2600 1590">
        <g transform="translate(1460 920) scale(.3333 .4974)">
            <path class="ln" d="M854 70L878 51 1271 157V895L1249 914 854 808z"/>
            <path class="ln" d="M854 70L1249 178V914M1249 178L1271 157"/>
            <path class="ln th" d="M876 87L1228 183V897L876 800z"/>
            <path class="ln" d="M1186 197h10v5h-8zM1186 529h10v5h-8zM1186 860h10v5h-8z"/>
            <path class="ln" d="M590 658L612 638 1079 766V1502L1058 1522 590 1394z"/>
            <path class="ln" d="M590 658L1058 786V1522M1058 786L1079 766"/>
            <path class="ln" d="M622 686L1022 795V1495L622 1386z"/>
            <path class="ln in" d="M638 690V1375L1022 1480M638 1375L622 1386"/>
            <path class="ln" d="M652 696h10v5h-8zM652 1027h10v5h-8zM652 1360h10v5h-8zM1004 1510v12h8l5-8"/>
            <path class="sel" d="M139 536L162 517 560 624V1361L539 1380 139 1273z"/>
            <path fill="#fff" d="M188 565L503 653V1345L188 1250z"/>
            <path fill="#7f9cdc" d="M188 565L503 653V1345L188 1250z"/>
            <path fill="#3f6cd0" fill-opacity=".5" d="M176 536L539 632V1345L503 1350V653L188 565V1255L176 1262z"/>
            <path class="sel in" d="M139 536L539 642V1380M539 642L560 624M160 519V1250L139 1273M160 1252L560 1361M176 536L539 632M188 565L503 653M516 640V1345M530 640V1345M176 1262L503 1352M188 1250L539 1345"/>
            <path class="bd" d="M176 536V1262M188 565V1250L503 1340M503 653V1350"/>
            <path class="sel in" d="M165 1293h10l34-20M490 652h10v5h-8zM490 983h10v5h-8zM490 1316h10v5h-8z"/>
        </g>
    </svg>
`)

component('drawing-area', `
    <style>
        ${base}
        :host{ display: grid; grid-template-rows: 40px 1fr 34px 4px; grid-template-columns: 1fr 33px; background: #fff; border-right: 4px solid #ccc; min-width: 0; }
        nav{ grid-column: 1 / 3; display: flex; background: #ccc; }
        .tab{ display: flex; align-items: center; gap: 14px; width: 256px; padding: 4px 10px 0; white-space: nowrap; }
        .tab.active{ gap: 16px; background: #fff; font-weight: bold; }
        .view{ position: relative; display: grid; margin: 4px 0 0 4px; border: 4px solid #30dfe6; min-height: 0; }
        .mode{ position: absolute; left: -4px; top: -4px; padding: 0 5px; background: #00f0ff; color: #111; font: bold 26px/36px "Liberation Sans", Arial, sans-serif; }
        .vscroll{ display: flex; flex-direction: column; align-items: center; justify-content: flex-end; padding-bottom: 8px; margin-top: 4px; background: #f0f0f0; }
        .vscroll rv-icon, .bar .arrow{ width: 16px; height: 16px; }
        .bar{ display: flex; align-items: center; gap: 10px; margin-left: 4px; padding-right: 8px; background: #f0f0f0; color: #000; }
        .scale{ width: 150px; text-align: center; padding-left: 14px; line-height: 30px; }
        .track{ flex: 1; display: flex; align-self: stretch; justify-content: center; }
        .track i{ width: 34px; background: #ccc; }
        .grip{ background: #f0f0f0; }
    </style>
    <nav>
        <span class="tab">${icon('plan')}Level 1</span>
        <span class="tab active">${icon('house')}{3D - mahan}${iconBtn('close', 'x')}</span>
    </nav>
    <div class="view">
        <door-model></door-model>
        <span class="mode">Temporary Hide/Isolate</span>
    </div>
    <div class="vscroll">${icon('down')}</div>
    <div class="bar">
        <span class="scale">1 : 100</span>
        ${['detail', 'style', 'sunOff', 'shadowOff', 'teapot', 'cropOff', 'cropShow', 'lockView', 'hideIsolate', 'reveal',
           'worksharing', 'constraints', 'analytic', 'displace', 'dimLock'].map(n => iconBtn(n)).join('')}
        ${icon('left', 'arrow')}
        <div class="track"><i></i></div>
        ${icon('right', 'arrow')}
    </div>
    <div class="grip">${icon('grip')}</div>
`)

// ---------- schedule window ----------
const marks = ['pi 10 a_0', 'pi 10 a_1', 'p i 10 a_2', 'pi 10 a_3', 'pi 10 a_4', 'pi 10 b_0', 'pi 10b_1', 'pi 10h_0', 'pi 10j_0', 'pi 10i_0',
    'pi 10e', 'pi 10 a_5', 'pi 10f_0', 'pi 10f_1', 'pi 10f_2', 'pi 10c_0', 'pi 10d_0', "pi 10h'_0", "pi 10h'_1", 'pi 10 h_1', 'pi 10h_2', '']

component('schedule-window', `
    <style>
        ${base}
        :host{ display: block; background: #d0d0d0; border: 2px solid #999; border-right: 0; border-bottom-width: 3px; box-shadow: 0 6px 16px rgba(0, 0, 0, .3); }
        header{ display: flex; align-items: center; gap: 11px; height: 56px; padding: 6px 13px 0; background: #ccc; white-space: nowrap; }
        header .table{ opacity: .6; }
        table{ width: 192px; margin-left: 5px; border-collapse: collapse; font: 21px/24px "Liberation Sans", Arial, sans-serif; color: #000; }
        td, th{ height: 32px; padding: 0 2px 5px; background: #fff; border: 1px solid #000; border-top: 1px dotted #555; border-bottom: 1px dotted #555; text-align: left; font-weight: normal; }
        .name th{ height: 80px; padding: 0 18px 4px; font-size: 30px; line-height: 36px; text-align: center; border: 2px solid #000; }
        .letter th{ background: #f0f0f0; font-weight: bold; text-align: center; border: 1px dotted #000; padding-bottom: 0; }
        .field th{ text-align: center; border: 2px solid #000; padding-bottom: 0; }
        .gap td{ background: none; border-right: 0; border-bottom: 1px solid #000; }
        tr:last-child td{ border-bottom: 2px solid #000; }
    </style>
    <header>${icon('revit')}${icon('schedule', 'table')}MIN02 -0-Gaines Techniques - 11 10 2021_mahan - Schedule: Generic Model Schedule</header>
    <table>
        <tr class="name"><th>&lt;Generic Model</th></tr>
        <tr class="letter"><th>A</th></tr>
        <tr class="field"><th>Mark</th></tr>
        <tr class="gap"><td></td></tr>
        ${marks.map(m => `<tr><td>${m}</td></tr>`).join('')}
    </table>
`)

// ---------- status bar ----------
component('status-bar', `
    <style>
        ${base}
        :host{ display: flex; align-items: center; height: 51px; padding: 0 58px 0 2px; background: #ccc; color: #111; }
        .hint{ width: 1410px; flex: none; }
        .combo{ display: grid; width: 406px; height: 34px; margin: 4px 8px 0; align-self: flex-start; }
        select{ grid-area: 1 / 1; appearance: none; font: inherit; line-height: 30px; color: #000; padding: 0 2px; border: 1px solid #eee; border-radius: 0; background: #fff; opacity: 1; }
        select:disabled{ color: #888; }
        .combo rv-icon{ grid-area: 1 / 1; justify-self: end; align-self: center; width: 14px; height: 14px; margin-right: 6px; }
        .count{ margin: 6px 16px 0 8px; }
        .gap{ margin-left: 10px; }
        label{ display: flex; align-items: center; gap: 6px; margin: 0 16px 0 auto; }
        input{ appearance: none; width: 30px; height: 30px; margin: 0; background: #eef0f3; border: 2px solid #444; }
        .tools{ display: flex; align-items: center; gap: 12px; }
    </style>
    <span class="hint">Click to select, TAB for alternates, CTRL adds, SHIFT unselects.</span>
    ${icon('worksets')}
    <div class="combo"><select aria-label="Workset"><option>Workset1</option></select>${icon('thinDown')}</div>
    ${icon('request')}<span class="count">:0</span>${icon('design')}${icon('designOff', 'gap')}
    <div class="combo"><select aria-label="Design option" disabled><option>Main Model</option></select>${icon('thinDown')}</div>
    <label><input type="checkbox">Editable Only</label>
    <div class="tools">${['selLinks', 'selUnder', 'selPinned', 'selFace', 'drag', 'progress'].map(n => iconBtn(n)).join('')}</div>
    ${icon('filter', 'gap')}<span>:1</span>
`)

// ---------- task bar ----------
component('task-bar', `
    <style>
        ${base}
        :host{ display: flex; align-items: center; height: 80px; background: #2b2b2b; color: #fff; }
        .app{ width: 96px; height: 80px; margin-right: 2px; justify-content: center; border-bottom: 4px solid transparent; border-top: 4px solid transparent; }
        .app rv-icon{ width: 34px; height: 34px; }
        .app .lg{ width: 46px; height: 46px; }
        .run{ border-bottom-color: #9fd0f6; }
        .active{ background: #555; border-top-color: #555; }
        .active rv-icon{ width: 48px; height: 48px; padding: 7px; background: #e4effa; }
        .tray{ display: flex; align-items: center; gap: 37px; margin-left: auto; padding-right: 50px; }
        .tray .lg{ width: 48px; height: 48px; }
        .tray .sm{ width: 28px; height: 28px; }
        .clock{ text-align: center; line-height: 36px; margin-left: -10px; }
    </style>
    <button class="app" aria-label="Start">${icon('windows')}</button>
    <button class="app" aria-label="Search">${icon('search')}</button>
    <button class="app" aria-label="Task view">${icon('taskView')}</button>
    <button class="app" aria-label="File Explorer">${icon('explorer', 'lg')}</button>
    <button class="app run" aria-label="Chrome">${icon('chrome', 'lg')}</button>
    <button class="app run active" aria-label="Revit">${icon('revit')}</button>
    <button class="app run" aria-label="Settings">${icon('gear')}</button>
    <div class="tray">
        ${icon('news', 'lg')}${icon('trayUp', 'sm')}<span>ENG</span>
        <span class="clock">10:01<br>13/10/2021</span>
        ${icon('notify')}
    </div>
`)

// ---------- pen strokes over the page ----------
const strokes = [
    [6, [174,861, 172,852, 180,845, 237,820, 302,792, 376,762, 500,716, 640,673, 834,621, 1042,571, 1251,530, 1543,471, 1772,427, 1981,399, 2200,388, 2268,385, 2336,380, 2404,377, 2473,377, 2517,377]],
    [7, [2478,354, 2500,368, 2527,377, 2535,386, 2527,399, 2499,413]],
    [6, [167,1040, 184,1061, 212,1079, 245,1097, 290,1117, 339,1135, 449,1163, 640,1206, 730,1222, 834,1237, 1001,1252, 1147,1257, 1293,1253, 1460,1237, 1700,1201, 1940,1158, 2200,1096, 2302,1070, 2411,1034, 2527,979, 2609,911, 2663,850, 2681,813, 2698,721, 2718,630, 2735,556, 2756,507, 2771,464, 2770,446, 2759,447, 2718,495, 2728,470, 2742,449, 2753,449, 2771,473, 2793,492]],
    [6, [2443,380, 2437,394, 2434,495, 2435,679, 2437,911, 2443,1022, 2456,1144, 2464,1190, 2468,1197]],
    [6, [2624,361, 2609,434, 2597,556, 2599,691, 2609,875, 2619,1015, 2625,1150, 2628,1167]],
    [6, [2806,358, 2804,495, 2810,642, 2813,801, 2815,1034, 2822,1120, 2840,1219]],
    [5, [155,911, 143,909, 118,917, 90,919, 61,914, 24,902, 6,892, 8,885, 33,871, 82,859, 118,852, 143,858, 155,877, 151,893, 127,915, 113,928]],
    [5, [92,1072, 61,1069, 20,1057, 12,1045, 24,1031, 65,1018, 118,1010, 147,1015, 163,1033, 159,1053, 135,1068, 102,1082, 69,1088]]
]

// smooth curve through every point
function smooth(flat) {
    const p = []
    for (let i = 0; i < flat.length; i += 2) p.push([flat[i], flat[i + 1]])
    let d = `M${p[0]}`
    for (let i = 0; i < p.length - 1; i++) {
        const a = p[i - 1] || p[i], b = p[i], c = p[i + 1], e = p[i + 2] || c
        // a third of the segment on each side keeps long and short segments even
        const h = Math.hypot(c[0] - b[0], c[1] - b[1]) / 3
        const t1 = Math.atan2(c[1] - a[1], c[0] - a[0]), t2 = Math.atan2(e[1] - b[1], e[0] - b[0])
        d += `C${b[0] + Math.cos(t1) * h} ${b[1] + Math.sin(t1) * h} ${c[0] - Math.cos(t2) * h} ${c[1] - Math.sin(t2) * h} ${c}`
    }
    return d
}

component('pen-layer', `
    <style>
        :host{ display: block; pointer-events: none; }
        svg{ display: block; width: 100%; height: 100%; }
        path{ fill: none; stroke: #ad1661; stroke-linecap: round; stroke-linejoin: round; }
    </style>
    <svg viewBox="0 0 3269 2160">${strokes.map(([w, pts]) => `<path d="${smooth(pts)}" stroke-width="${w}"/>`).join('')}</svg>
`)

// ---------- page ----------
component('revit-app', `
    <style>
        :host{ position: relative; display: flex; flex-direction: column; min-height: 100vh; padding-left: 30px; box-sizing: border-box; overflow: hidden; }
        main{ flex: 1; display: grid; grid-template-columns: 586px 1fr; gap: 4px; padding-top: 4px; background: #ccc; }
        aside{ display: flex; flex-direction: column; min-width: 0; }
        schedule-window{ position: absolute; top: 260px; right: 0; width: 1056px; height: 1680px; }
        pen-layer{ position: absolute; inset: 0; }
    </style>
    <title-bar></title-bar>
    <ribbon-tabs></ribbon-tabs>
    <revit-ribbon></revit-ribbon>
    <options-bar></options-bar>
    <main>
        <aside>
            <properties-palette></properties-palette>
            <project-browser></project-browser>
        </aside>
        <drawing-area></drawing-area>
    </main>
    <status-bar></status-bar>
    <task-bar></task-bar>
    <schedule-window></schedule-window>
    <pen-layer></pen-layer>
`)
</script>
</body>
</html>
